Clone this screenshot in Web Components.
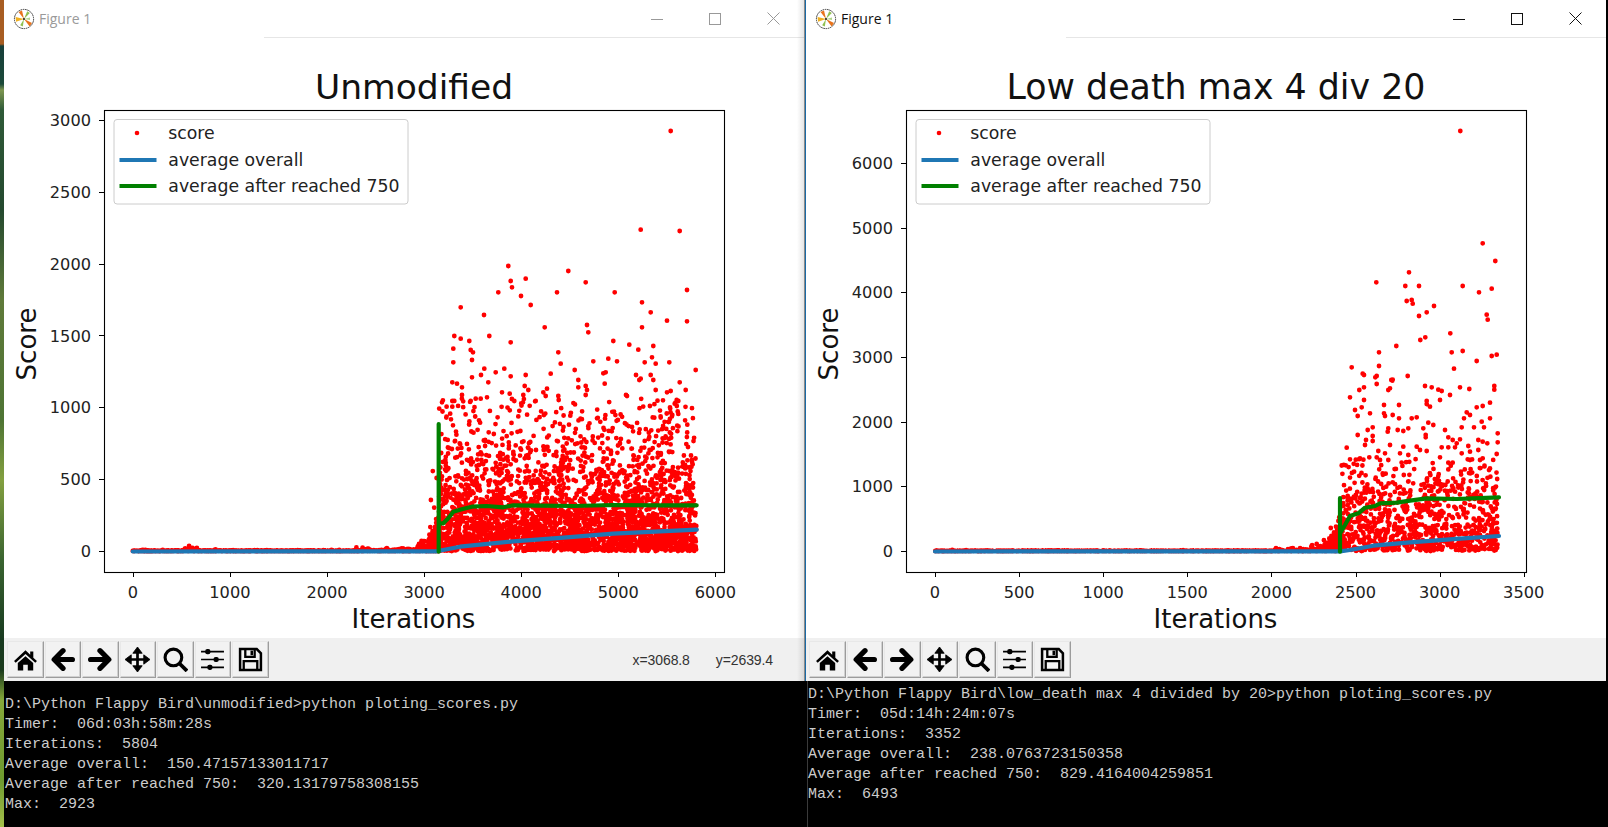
<!DOCTYPE html>
<html><head><meta charset="utf-8"><title>Figures</title>
<style>
html,body{margin:0;padding:0;background:#000;height:100%;overflow:hidden}
</style></head>
<body>
<desk-app>
  <plot-column>
    <fig-window slot="win" gutter inactive fig="left" coords="x=3068.8|y=2639.4"></fig-window>
    <term-panel slot="term" first="10" style="padding-left:1px">D:\Python Flappy Bird\unmodified&gt;python ploting_scores.py
Timer:  06d:03h:58m:28s
Iterations:  5804
Average overall:  150.47157133011717
Average after reached 750:  320.13179758308155
Max:  2923</term-panel>
  </plot-column>
  <plot-column>
    <fig-window slot="win" fig="right"></fig-window>
    <term-panel slot="term" divider first="0">D:\Python Flappy Bird\low_death max 4 divided by 20&gt;python ploting_scores.py
Timer:  05d:14h:24m:07s
Iterations:  3352
Average overall:  238.0763723150358
Average after reached 750:  829.4164004259851
Max:  6493</term-panel>
  </plot-column>
</desk-app>
<script>
function rng(a){return function(){a|=0;a=a+0x6D2B79F5|0;var t=Math.imul(a^a>>>15,1|a);t=t+Math.imul(t^t>>>7,61|t)^t;return((t^t>>>14)>>>0)/4294967296}}

/* Outlying points read from the reference, in window pixels */
function fromZoom(list,ox,oy){return list.map(function(p){return [ox+p[0]/3,oy+p[1]/3]})}
var L1=[[752,57],[662,353],[779,357],[265,462],[445,477],[272,507],[317,500],[497,511],[276,526],[235,541],[411,541],[584,541],[801,534],[303,552],[332,579],[122,586],[666,571],[192,609],[692,601]];
var L2=[[374,22],[501,15],[505,37],[666,22],[741,2],[801,4],[103,48],[122,56],[148,63],[208,48],[272,67],[580,63],[628,74],[700,78],[100,86],[152,90],[159,97],[415,97],[655,89],[696,112],[100,127],[156,120],[422,131],[520,124],[565,116],[591,124],[674,127],[707,131],[748,127],[193,146],[253,146],[464,150],[827,150],[227,157],[183,165],[156,172],[272,169],[317,165],[392,161],[550,160],[557,157],[648,165],[692,165],[662,176],[658,180],[475,180],[700,180],[97,187],[111,191],[205,187],[554,191],[779,187],[126,202],[314,198],[475,202],[497,198],[381,206],[325,210],[501,210],[707,210],[797,210],[741,217],[752,213],[246,217],[269,221],[370,217],[126,225],[310,225],[377,228],[415,228],[497,225],[618,225],[621,228],[66,247],[97,243],[152,243],[167,236],[182,236],[201,232],[283,243],[347,243],[770,240],[775,243]];
var R1=[[481,57],[548,394],[586,447],[327,481],[229,511],[316,522],[357,522],[488,522],[537,541],[575,530],[320,567],[335,564],[338,575],[402,582],[380,601],[357,612],[560,608],[563,623],[451,664],[376,676],[361,684],[289,702],[237,721],[455,721],[488,717],[590,728],[575,732],[530,747],[155,766],[237,762],[462,770],[188,785],[192,789],[226,796],[230,792],[274,804],[278,803],[323,792]];
var R2=[[350,12],[397,2],[495,18],[515,22],[535,29],[545,33],[600,22],[628,27],[703,18],[703,29],[298,30],[312,22],[385,30],[390,25],[270,52],[312,60],[570,45],[540,60],[500,63],[500,72],[510,80],[372,75],[417,75],[305,82],[285,90],[293,108],[330,100],[372,100],[375,108],[398,105],[417,115],[455,115],[470,112],[620,97],[630,105],[612,115],[650,82],[668,78],[690,68],[690,115],[665,125],[505,128],[520,135],[490,145],[555,150],[605,142],[642,142],[672,142],[323,150],[338,142],[385,145],[383,155],[413,150],[430,153],[445,145],[293,165],[338,168],[318,180],[338,183],[497,165],[497,172],[565,172],[578,180],[600,178],[590,190],[655,180],[668,185],[682,190],[713,160],[713,187],[260,203],[390,195],[430,200],[470,200],[315,195],[480,210],[500,213],[545,202],[565,202],[585,202],[625,198],[655,210],[605,220],[630,215],[710,222],[355,213],[375,220],[350,232],[420,220],[445,225],[270,238],[300,235],[328,232],[360,240],[385,240],[540,232],[565,248],[578,248],[630,240],[660,240],[668,235]];

var FIGS={
 left:{title:'Unmodified',ox:4,x0:128.8,sx:0.0971,sy:0.14369,xt:[0,1000,2000,3000,4000,5000,6000],yt:[0,500,1000,1500,2000,2500,3000],
  pts:fromZoom(L1,420,112).concat(fromZoom(L2,420,320)),
  gen:function(r,add){var i,u;
    for(i=0;i<800;i++){var d=r()*2950,m=(d>520&&d<660)?7:((d>2300)?4:1.5);add(d,-Math.log(1-r())*m)}
    for(i=0;i<420;i++){u=r();d=2900+Math.sqrt(u)*260;add(d,-Math.log(1-r())*(15+u*u*85))}
    add(3090,556);add(3070,355);
    for(i=0;i<3200;i++){d=3150+r()*2654;var s=-Math.log(1-r())*320;if(s<1060)add(d,s)}
  },
  blue:[[0,514.6],[110,514],[180,500],[340,484],[500,472],[640,461],[780,454],[890,449]],
  green:[[116,132],[116,515],[116,430],[130,430],[145,415],[160,395],[185,388],[215,380],[260,378],[310,382],[340,376],[420,377],[520,378],[640,375],[780,376],[890,376]],
  gx:400},
 right:{title:'Low death max 4 div 20',ox:806,x0:129,sx:0.1682,sy:0.06468,xt:[0,500,1000,1500,2000,2500,3000,3500],yt:[0,1000,2000,3000,4000,5000,6000],
  pts:fromZoom(R1,1300,112).concat(fromZoom(R2,1260,380)),
  gen:function(r,add){var i,u,d;
    for(i=0;i<650;i++){d=r()*2250;add(d,-Math.log(1-r())*(d>2000?12:2.5))}
    for(i=0;i<220;i++){u=r();d=2230+Math.sqrt(u)*190;add(d,-Math.log(1-r())*(30+u*u*240))}
    for(i=0;i<1050;i++){d=2420+r()*925;var s=-Math.log(1-r())*780;if(s<1430)add(d,s)}
  },
  blue:[[0,514.6],[240,514],[270,510],[340,497],[450,487],[600,476],[717,468]],
  green:[[240,354],[240,515],[240,460],[255,435],[270,408],[295,400],[315,383],[345,378],[360,370],[410,368],[450,362],[500,355],[590,357],[640,355],[717,352]],
  gx:1260}
};

class DeskApp extends HTMLElement{constructor(){super();this.attachShadow({mode:'open'}).innerHTML=`<style>
:host{display:flex;width:1608px;height:827px;background:#000}
.strip{flex:0 0 4px;background:linear-gradient(to bottom,#a85d22 0,#a85d22 44px,#173f3a 46px,#1c4a3a 84px,#7d9650 90px,#2f5a38 110px,#24492f 210px,#5f7a3a 300px,#4e7434 420px,#83a040 480px,#3a6430 560px,#183a20 640px,#1a3a1c 670px,#85a83a 700px,#6e9a30 780px,#a4c04a 827px)}
</style><div class="strip"></div><slot></slot>`}}
customElements.define('desk-app',DeskApp);

class PlotColumn extends HTMLElement{constructor(){super();this.attachShadow({mode:'open'}).innerHTML=`<style>
:host{display:flex;flex-direction:column;flex:0 0 802px;height:827px}
</style><slot name="win"></slot><slot name="term"></slot>`}}
customElements.define('plot-column',PlotColumn);

class TermPanel extends HTMLElement{constructor(){super();var f=this.getAttribute('first')||'0';this.attachShadow({mode:'open'}).innerHTML=`<style>
:host{display:block;flex:1;background:#000;color:#ccc;box-sizing:border-box;font:15px/20px "Liberation Mono",monospace;white-space:pre;padding-top:${4+ +f}px}
:host([divider]){margin-left:1px;border-left:1px solid #3a3a3a}
</style><slot></slot>`}}
customElements.define('term-panel',TermPanel);

class FigIcon extends HTMLElement{constructor(){super();this.attachShadow({mode:'open'}).innerHTML=`<style>:host{display:block;width:22px;height:22px}svg{display:block}</style>
<svg width="22" height="22" viewBox="0 0 22 22"><circle cx="11" cy="11" r="9.6" fill="#fff" stroke="#333" stroke-width="1" stroke-dasharray="1.6 .7"/>
<path d="M11 11L5.5 4 9 2.6Z" fill="#e8731c"/><path d="M11 11L2.6 9 3 13.8Z" fill="#f0b020"/><path d="M11 11L14.2 3.2 16.8 5Z" fill="#8fc050"/><path d="M11 11L9.8 18.4 7.2 17.2Z" fill="#8fc050"/><path d="M11 11L19 15 16.6 18.6Z" fill="#e8731c"/><circle cx="11" cy="11" r="1.1" fill="#222"/><path d="M11 11L17 9.6 17 12Z" fill="#9ccb6a" opacity=".8"/></svg>`}}
customElements.define('fig-icon',FigIcon);

class TitleBar extends HTMLElement{constructor(){super();var ina=this.hasAttribute('inactive');var c=ina?'#999':'#111';this.attachShadow({mode:'open'}).innerHTML=`<style>
:host{display:grid;grid-template-rows:37px 1px;height:38px;background:#fff}
.row{display:flex;align-items:center;padding-left:9px}
.t{margin-left:4px;font:14px "Open Sans",sans-serif;color:${ina?'#9a9a9a':'#111'}}
.ctl{margin-left:auto;display:flex;padding-right:1px}
.ctl div{width:58.5px;height:37px;display:flex;align-items:center;justify-content:center}
.rule{margin-left:260px;background:#e6e6e6}
svg{display:block}
</style><div class="row"><fig-icon></fig-icon><span class="t">Figure 1</span>
<div class="ctl"><div><svg width="12" height="12" viewBox="0 0 12 12"><path d="M0 6.5H12" stroke="${c}" fill="none"/></svg></div>
<div><svg width="12" height="12" viewBox="0 0 12 12"><rect x=".5" y=".5" width="11" height="11" stroke="${c}" fill="none"/></svg></div>
<div><svg width="13" height="13" viewBox="0 0 13 13"><path d="M.5 .5L12.5 12.5M12.5 .5L.5 12.5" stroke="${c}" fill="none"/></svg></div></div></div><div class="rule"></div>`}}
customElements.define('title-bar',TitleBar);

var ICONS={
home:'<path d="M1 13.5L12 3.2 16.5 7.4V4.2H19.5V10.2L23 13.5 21.4 15.2 12 6.6 2.6 15.2Z"/><path d="M4.6 15.4L12 8.8 19.4 15.4V22.5H14.2V17H9.8V22.5H4.6Z"/>',
back:'<path d="M21.5 12H5M12.5 3.5L4 12 12.5 20.5" fill="none" stroke="#000" stroke-width="5" stroke-linejoin="round" stroke-linecap="round"/>',
forward:'<path d="M2.5 12H19M11.5 3.5L20 12 11.5 20.5" fill="none" stroke="#000" stroke-width="5" stroke-linejoin="round" stroke-linecap="round"/>',
move:'<path d="M12 3V21M3 12H21" stroke="#000" stroke-width="2.6" fill="none"/><path d="M12 0L16.5 6H7.5ZM12 24L7.5 18H16.5ZM0 12L6 7.5V16.5ZM24 12L18 16.5V7.5Z" stroke="#000" stroke-width=".8" stroke-linejoin="round"/>',
zoom:'<circle cx="10" cy="10" r="8" fill="none" stroke="#000" stroke-width="3"/><path d="M15.8 15.8L23 23" stroke="#000" stroke-width="3.6" fill="none"/>',
cfg:'<path d="M1 4.5H23M1 12H23M1 19.5H23" stroke="#000" stroke-width="1.6" fill="none"/><rect x="5" y="2" width="5" height="5" rx="2"/><rect x="13" y="9.5" width="5" height="5" rx="2"/><rect x="7" y="17" width="5" height="5" rx="2"/>',
save:'<path d="M2 2H18L22 6V22H2Z" fill="none" stroke="#000" stroke-width="2.4" stroke-linejoin="miter"/><path d="M7 2.5V9.5H16V2.5" fill="none" stroke="#000" stroke-width="2.2"/><rect x="12" y="3.5" width="2.4" height="4.4"/><path d="M5.5 21.5V13.5H18.5V21.5" fill="none" stroke="#000" stroke-width="2.2"/>'
};
class TbButton extends HTMLElement{constructor(){super();var k=this.getAttribute('icon');this.attachShadow({mode:'open'}).innerHTML=`<style>
:host{display:flex;align-items:center;justify-content:center;box-sizing:border-box;width:36.5px;height:37px;background:#f2f2f2;border:1px solid;border-color:#e8e8e8 #9c9c9c #9c9c9c #e8e8e8;box-shadow:inset -1px -1px 0 #d0d0d0}
svg{display:block}
</style><svg width="25" height="25" viewBox="0 0 24 24" role="img" aria-label="${k}">${ICONS[k]}</svg>`}}
customElements.define('tb-button',TbButton);

class NavBar extends HTMLElement{constructor(){super();var c=this.getAttribute('coords');var p=c?c.split('|'):null;this.attachShadow({mode:'open'}).innerHTML=`<style>
:host{display:flex;align-items:center;box-sizing:border-box;height:43px;padding:0 31px 0 3px;background:#f0f0f0;gap:1px}
.m{margin-left:auto;display:flex;gap:26px;font:14px/20px "Liberation Sans",sans-serif;color:#333;letter-spacing:-.1px}
</style><tb-button icon="home"></tb-button><tb-button icon="back"></tb-button><tb-button icon="forward"></tb-button><tb-button icon="move"></tb-button><tb-button icon="zoom"></tb-button><tb-button icon="cfg"></tb-button><tb-button icon="save"></tb-button>${p?`<div class="m"><span>${p[0]}</span><span>${p[1]}</span></div>`:''}`}}
customElements.define('nav-bar',NavBar);

class MplPlot extends HTMLElement{constructor(){super();var F=FIGS[this.getAttribute('fig')];
 var X=function(d){return F.x0+d*F.sx},Y=function(s){return 513-s*F.sy};
 var dots='';function dot(x,y){dots+='M'+x.toFixed(1)+' '+y.toFixed(1)+'h0'}
 F.pts.forEach(function(p){dot(p[0]-F.ox,p[1]-38)});
 F.gen(rng(F.title.length*77),function(d,s){dot(X(d),Y(s))});
 var line=function(a){return a.map(function(p,i){return (i?'L':'M')+(F.gx+p[0]/3-F.ox).toFixed(1)+' '+(380+p[1]/3-38).toFixed(1)}).join('')};
 var bl=line(F.blue).replace(/^M[\d.]+/,'M'+X(0).toFixed(1));
 var ticks='',labels='';
 F.xt.forEach(function(v){var x=X(v);ticks+='<path d="M'+(Math.round(x)+.5)+' 534v5"/>';labels+='<text x="'+x.toFixed(1)+'" y="560" text-anchor="middle">'+v+'</text>'});
 F.yt.forEach(function(v){var y=Y(v);ticks+='<path d="M95 '+(Math.round(y)+.5)+'h5"/>';labels+='<text x="87" y="'+(y+6).toFixed(1)+'" text-anchor="end">'+v+'</text>'});
 var fs=F.title.length>12?34.8:34.5;
 this.attachShadow({mode:'open'}).innerHTML=`<style>
:host{display:block;width:800px;height:600px;background:#fff}
svg{display:block}
text{font-family:"DejaVu Sans",sans-serif;fill:#111}
.tk text{font-size:16.2px;fill:#222}
.tk path{stroke:#000;stroke-width:1;fill:none}
.lg text{font-size:17.3px;fill:#222}
</style><svg width="800" height="600" viewBox="0 0 800 600">
<text x="410" y="61" text-anchor="middle" font-size="${fs}">${F.title}</text>
<path d="${dots}" fill="none" stroke="#ff0000" stroke-width="4.8" stroke-linecap="round"/>
<path d="${bl}" fill="none" stroke="#1f77b4" stroke-width="4.2" stroke-linejoin="round" stroke-linecap="round"/>
<path d="${line(F.green)}" fill="none" stroke="#008000" stroke-width="4.2" stroke-linejoin="round" stroke-linecap="round"/>
<rect x="100.5" y="72.5" width="620" height="462" fill="none" stroke="#000" stroke-width="1.1"/>
<g class="tk">${ticks}${labels}</g>
<text x="409.5" y="590" text-anchor="middle" font-size="26">Iterations</text>
<text transform="translate(32 306) rotate(-90)" text-anchor="middle" font-size="26">Score</text>
<g class="lg"><rect x="110" y="81.5" width="294" height="84.5" rx="3" fill="#fff" fill-opacity=".9" stroke="#ccc" stroke-width="1"/>
<circle cx="133" cy="95" r="2.3" fill="#f00"/><text x="164.3" y="101">score</text>
<path d="M115.5 122H152.5" stroke="#1f77b4" stroke-width="4.2"/><text x="164.3" y="127.7">average overall</text>
<path d="M115.5 148H152.5" stroke="#008000" stroke-width="4.2"/><text x="164.3" y="153.7">average after reached 750</text></g>
</svg>`}}
customElements.define('mpl-plot',MplPlot);

class FigWindow extends HTMLElement{constructor(){super();var ina=this.hasAttribute('inactive')?'inactive':'';var c=this.getAttribute('coords');var fig=this.getAttribute('fig');this.attachShadow({mode:'open'}).innerHTML=`<style>
:host{display:block;position:relative;width:800px;background:#fff}
:host([gutter]){width:802px;box-sizing:border-box;padding-right:2px;background:linear-gradient(to right,#fff 800px,#8a8a8a 800px,#8a8a8a 801px,#1a6aa6 801px)}
.shade{display:none;position:absolute;top:0;bottom:0;left:793px;width:7px;background:linear-gradient(to right,rgba(0,0,0,0),rgba(0,0,0,.1));pointer-events:none}
:host([gutter]) .shade{display:block}
</style><title-bar ${ina}></title-bar><mpl-plot fig="${fig}"></mpl-plot><nav-bar ${c?`coords="${c}"`:''}></nav-bar><div class="shade"></div>`}}
customElements.define('fig-window',FigWindow);
</script>
</body></html>
